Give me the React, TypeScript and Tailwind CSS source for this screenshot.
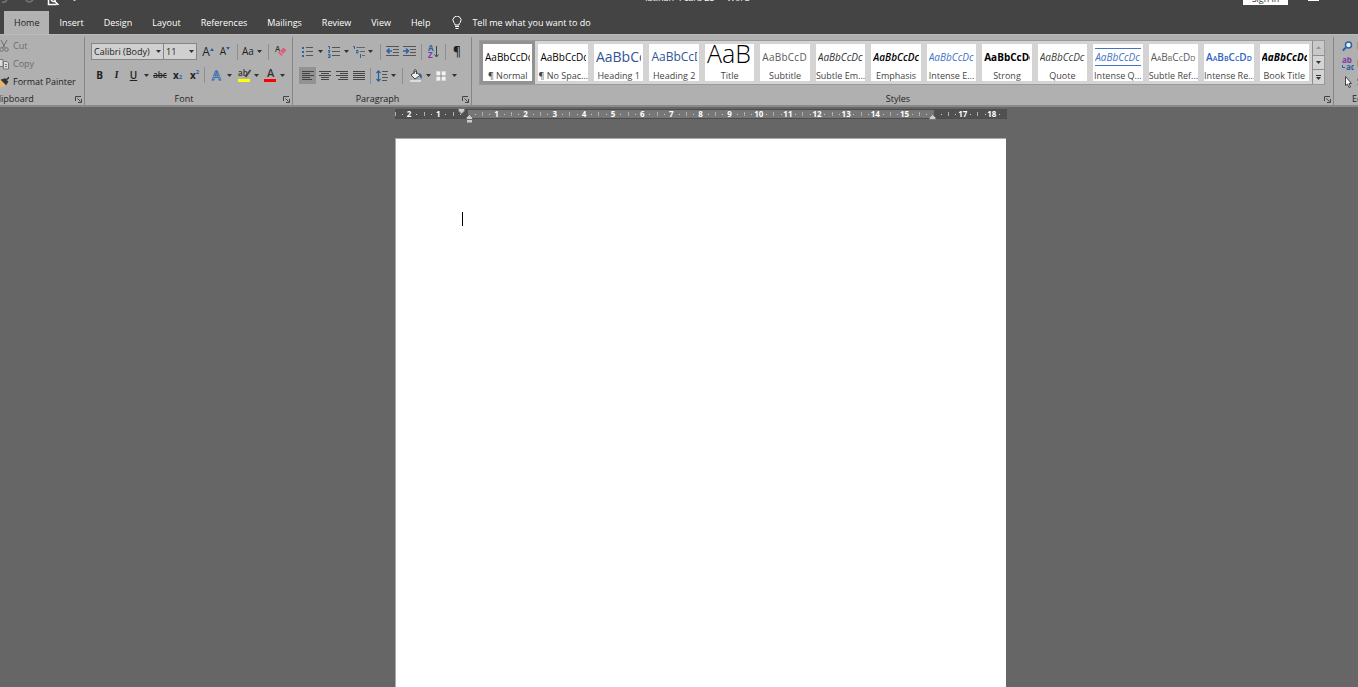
import { useState } from "react";
import type { ReactNode } from "react";

const tabs = ["Home", "Insert", "Design", "Layout", "References", "Mailings", "Review", "View", "Help"];

const styleTiles = [
  { name: "¶ Normal", sample: "AaBbCcDc", look: "text-[10px] font-medium text-black" },
  { name: "¶ No Spac...", sample: "AaBbCcDc", look: "text-[10px] font-medium text-black" },
  { name: "Heading 1", sample: "AaBbCc", look: "text-[14px] text-[#2f5597]" },
  { name: "Heading 2", sample: "AaBbCcD", look: "text-[12px] text-[#2f5597]" },
  { name: "Title", sample: "AaB", look: "-mt-2 text-[25px] font-light text-black" },
  { name: "Subtitle", sample: "AaBbCcD", look: "text-[10px] tracking-wide text-[#5a5a5a]" },
  { name: "Subtle Em...", sample: "AaBbCcDc", look: "text-[10px] font-medium italic text-[#303030]" },
  { name: "Emphasis", sample: "AaBbCcDc", look: "text-[10px] font-semibold italic text-black" },
  { name: "Intense E...", sample: "AaBbCcDc", look: "text-[10px] font-medium italic text-[#4472c4]" },
  { name: "Strong", sample: "AaBbCcDc", look: "text-[10px] font-bold text-black" },
  { name: "Quote", sample: "AaBbCcDc", look: "text-[10px] font-medium italic text-[#404040]" },
  { name: "Intense Q...", sample: "AaBbCcDc", look: "text-[10px] font-medium italic text-[#4472c4] border-y border-[#4472c4]" },
  { name: "Subtle Ref...", sample: "AaBbCcDd", look: "text-[10px] [font-variant:small-caps] text-[#5a5a5a]" },
  { name: "Intense Re...", sample: "AaBbCcDd", look: "text-[10px] [font-variant:small-caps] font-semibold text-[#2f62c4]" },
  { name: "Book Title", sample: "AaBbCcDc", look: "text-[10px] font-bold italic text-black" },
];

const rulerCells = ["2", "1", "", "1", "2", "3", "4", "5", "6", "7", "8", "9", "10", "11", "12", "13", "14", "15", "", "17", "18"];

const Caret = () => (
  <svg width="5" height="3" viewBox="0 0 5 3" className="shrink-0"><path d="M0 0h5L2.500 3z" fill="#333" /></svg>
);

const Sep = () => <span className="h-4 w-px shrink-0 bg-[#8f8f8f]" />;

const Btn = ({ label, className = "", children }: { label: string; className?: string; children?: ReactNode }) => (
  <button aria-label={label} className={"flex shrink-0 items-center justify-center " + className}>{children}</button>
);

const Launcher = ({ label }: { label: string }) => (
  <button aria-label={label} className="shrink-0">
    <svg width="7" height="7" viewBox="0 0 7 7" fill="none" stroke="#444" strokeWidth="1">
      <path d="M.5 5V.5H6M2.500 2.500l3 3M6.500 3v3.500H3" />
    </svg>
  </button>
);

const Group = ({ title, className, labelClass = "text-center", children }: { title: string; className: string; labelClass?: string; children: ReactNode }) => (
  <section className={"flex flex-col border-r border-[#858585] " + className}>
    <div className="h-[56px]">{children}</div>
    <div className="flex h-3 items-center pr-[2px] font-medium">
      <span className={"flex-1 leading-3 " + labelClass}>{title}</span>
      <Launcher label={title + " settings"} />
    </div>
  </section>
);

const Lines = ({ rows }: { rows: number[][] }) => (
  <svg width="12" height="10" viewBox="0 0 12 10" fill="#444">
    {rows.map(([x, w], i) => <rect key={i} x={x} y={i * 2} width={w} height="1" />)}
  </svg>
);

const Bullets = () => (
  <svg width="12" height="12" viewBox="0 0 12 12">
    <path d="M0 1h2v2H0zM0 5h2v2H0zM0 9h2v2H0z" fill="#2b62a3" />
    <path d="M4 1.500h7M4 5.500h7M4 9.500h7" stroke="#555" />
  </svg>
);

const Numbering = () => (
  <svg width="12" height="12" viewBox="0 0 12 12">
    <path d="M0 .5h1.500V3M0 4.500h2L.5 6.500H2M0 8.500h2v3H0M.5 10H2" fill="none" stroke="#2b62a3" />
    <path d="M4 1.500h8M4 5.500h8M4 9.500h8" stroke="#555" />
  </svg>
);

const Multilevel = () => (
  <svg width="13" height="12" viewBox="0 0 13 12">
    <path d="M0 .5h1.500V3M3 4.500h2V7H3.500V5.500M7.500 8v4" fill="none" stroke="#2b62a3" />
    <path d="M3.500 1.500H12M7 5.500h5M9 9.500h3" stroke="#666" />
  </svg>
);

const Indent = ({ flip = false }: { flip?: boolean }) => (
  <svg width="13" height="11" viewBox="0 0 13 11">
    <path d="M0 .5h13M7 3.500h6M7 6.500h6M0 9.500h13" stroke="#555" />
    <path d={flip ? "M0 5h5M3 2.500L5.500 5L3 7.500" : "M6 5H1M3.500 2.500L1 5l2.500 2.500"} fill="none" stroke="#2b62a3" strokeWidth="1.500" />
  </svg>
);

const LineSpacing = () => (
  <svg width="12" height="12" viewBox="0 0 12 12">
    <path d="M2.500 1v10M.5 3L2.500 1l2 2M.5 9l2 2l2-2" fill="none" stroke="#2b62a3" strokeWidth="1.300" />
    <path d="M6 1.500h6M6 4.500h5M6 7.500h6M6 10.500h5" stroke="#555" />
  </svg>
);

const Bucket = () => (
  <svg width="13" height="13" viewBox="0 0 13 13">
    <path d="M5.500 2.500L10 6.500L5 10L1 6z" fill="#eee" stroke="#444" />
    <path d="M4 5V1.500Q5.500-.5 6.500 1.500V5" fill="none" stroke="#444" />
    <path d="M9 4q4 1 2.500 6Q9.500 8 9 4z" fill="#2b62a3" />
    <path d="M0 11h11v2H0z" fill="#ddd" />
  </svg>
);

const Borders = () => (
  <svg width="10" height="10" viewBox="0 0 10 10">
    <path d="M0 0h10v10H0z" fill="#f3f3f3" />
    <path d="M5 0v10M0 5h10" stroke="#888" />
    <path d="M.5.5h9v9h-9z" fill="none" stroke="#bbb" strokeDasharray="1 1" />
  </svg>
);

const Eraser = () => (
  <svg width="12" height="13" viewBox="0 0 12 13">
    <text x="0" y="7" fontSize="8" fontWeight="600" fill="#333">A</text>
    <path d="M8.500 2.500L11.500 5L6.500 11L3 8z" fill="#d9627c" />
    <path d="M5 6.500L8 9.500" stroke="#eba3b2" />
  </svg>
);

const Highlighter = () => (
  <svg width="14" height="13" viewBox="0 0 14 13">
    <text x="0" y="7" fontSize="8" fontWeight="600" fill="#333">ab</text>
    <path d="M12.500 1L7.500 8" stroke="#444" strokeWidth="1.800" />
    <path d="M0 10h12v3H0z" fill="#ff0" />
  </svg>
);

const FontColor = () => (
  <svg width="13" height="13" viewBox="0 0 13 13">
    <text x="3" y="8" fontSize="11" fontWeight="600" fill="#333">A</text>
    <path d="M0 10h12v3H0z" fill="#f00" />
  </svg>
);

const SortIcon = () => (
  <svg width="12" height="14" viewBox="0 0 12 14">
    <text x="0" y="6" fontSize="8" fontWeight="700" fill="#2b62a3">A</text>
    <text x="0" y="13" fontSize="8" fontWeight="700" fill="#7d3aa5">Z</text>
    <path d="M8.500 1v11M6.500 9.500l2 2.500l2-2.500" fill="none" stroke="#444" />
  </svg>
);

const Clipboard = () => (
  <Group title="Clipboard" className="w-[85px] shrink-0 overflow-hidden" labelClass="-ml-[7px] text-left">
    <div className="flex flex-col">
      <button className="flex h-[18px] items-center gap-1 text-[#6c6c6c]">
        <svg width="9" height="12" viewBox="0 0 9 12" fill="none" stroke="#6c6c6c">
          <path d="M1 0l4 8M7 0L2.500 8" /><circle cx="1.500" cy="9.500" r="1.800" /><circle cx="6.500" cy="9.500" r="1.800" />
        </svg>
        Cut
      </button>
      <button className="flex h-[18px] items-center gap-1 text-[#6c6c6c]">
        <svg width="9" height="12" viewBox="0 0 9 12" fill="#ddd" stroke="#777">
          <path d="M-2 1.500h5v7h-5zM3.500 3.500H7l1.500 1.500v6h-5z" /><path d="M5 6.500h2M5 8.500h2" />
        </svg>
        Copy
      </button>
      <button className="flex h-[18px] items-center gap-1 whitespace-nowrap text-[#222]">
        <svg width="9" height="12" viewBox="0 0 9 12">
          <path d="M0 5l3-1l3 3l-3 4H0z" fill="#e8b765" /><path d="M2 4l3-1l2.500 2.500L6 8zM6 4l3.500-3" fill="#333" stroke="#333" strokeWidth="1.500" />
        </svg>
        Format Painter
      </button>
    </div>
  </Group>
);

const FontGroup = () => (
  <Group title="Font" className="w-[208px] shrink-0">
    <div className="flex flex-col gap-[7px] pl-[6px] pt-[6px]">
      <div className="flex h-[17px] items-center">
        <button aria-label="Font name" className="flex h-[17px] w-[73px] items-center justify-between whitespace-nowrap border border-[#858585] bg-[#d0d0d0] px-[2px]">Calibri (Body)<Caret /></button>
        <button aria-label="Font size" className="-ml-px flex h-[17px] w-[34px] items-center justify-between border border-[#858585] bg-[#d0d0d0] px-[2px]">11<Caret /></button>
        <Btn label="Grow font" className="ml-[3px] h-4 w-4 text-[12px] font-medium">A<svg width="4" height="8" viewBox="0 0 4 8"><path d="M0 3L2 0l2 3z" fill="#2b62a3" /></svg></Btn>
        <Btn label="Shrink font" className="ml-px h-4 w-4 text-[10px] font-medium">A<svg width="4" height="10" viewBox="0 0 4 10"><path d="M0 0h4L2 3z" fill="#2b62a3" /></svg></Btn>
        <span className="w-[4px]" /><Sep />
        <Btn label="Change case" className="ml-[4px] h-4 gap-[3px] text-[10px] font-medium">Aa<Caret /></Btn>
        <span className="w-[6px]" /><Sep />
        <Btn label="Clear formatting" className="ml-[6px] h-4"><Eraser /></Btn>
      </div>
      <div className="flex h-4 items-center text-[10px]">
        <Btn label="Bold" className="h-4 w-[17px] font-bold">B</Btn>
        <Btn label="Italic" className="h-4 w-[17px] font-serif font-bold italic">I</Btn>
        <Btn label="Underline" className="h-4 w-[17px] font-semibold underline">U</Btn>
        <Btn label="Underline options" className="h-4 w-[9px]"><Caret /></Btn>
        <Btn label="Strikethrough" className="h-4 w-[18px] text-[8px] font-semibold line-through">abc</Btn>
        <Btn label="Subscript" className="h-4 w-[17px] font-bold">x<sub className="text-[6px] text-[#2b62a3]">2</sub></Btn>
        <Btn label="Superscript" className="h-4 w-[17px] font-bold">x<sup className="text-[6px] text-[#2b62a3]">2</sup></Btn>
        <span className="w-px" /><Sep />
        <Btn label="Text effects" className="ml-[6px] h-4 gap-1">
          <svg width="12" height="13" viewBox="0 0 12 13"><text x="1" y="11" fontSize="13" fontWeight="600" fill="#c9d9ec" stroke="#2b62a3" strokeWidth=".8">A</text></svg><Caret />
        </Btn>
        <Btn label="Highlight" className="ml-[6px] h-4 gap-[2px]"><Highlighter /><Caret /></Btn>
        <Btn label="Font color" className="ml-[5px] h-4 gap-[3px]"><FontColor /><Caret /></Btn>
      </div>
    </div>
  </Group>
);

const ParagraphGroup = () => (
  <Group title="Paragraph" className="w-[179px] shrink-0">
    <div className="flex flex-col gap-[7px] pl-[6px] pt-[6px]">
      <div className="flex h-[17px] items-center">
        <Btn label="Bullets" className="ml-[3px] h-4 gap-[4px]"><Bullets /><Caret /></Btn>
        <Btn label="Numbering" className="ml-[5px] h-4 gap-[4px]"><Numbering /><Caret /></Btn>
        <Btn label="Multilevel list" className="ml-[4px] h-4 gap-[2px]"><Multilevel /><Caret /></Btn>
        <span className="w-[7px]" /><Sep />
        <Btn label="Decrease indent" className="ml-[5px] h-4"><Indent /></Btn>
        <Btn label="Increase indent" className="ml-1 h-4"><Indent flip /></Btn>
        <span className="w-[5px]" /><Sep />
        <Btn label="Sort" className="ml-[6px] h-4"><SortIcon /></Btn>
        <span className="w-[5px]" /><Sep />
        <Btn label="Show marks" className="ml-[7px] h-4 text-[12px] font-semibold">¶</Btn>
      </div>
      <div className="flex h-[17px] items-center">
        <Btn label="Align left" className="h-[17px] w-[17px] bg-[#929292]"><Lines rows={[[0, 12], [0, 8], [0, 12], [0, 8], [0, 10]]} /></Btn>
        <Btn label="Center" className="h-[17px] w-[17px]"><Lines rows={[[0, 12], [2, 8], [0, 12], [2, 8], [2, 8]]} /></Btn>
        <Btn label="Align right" className="h-[17px] w-[17px]"><Lines rows={[[0, 12], [4, 8], [0, 12], [4, 8], [2, 10]]} /></Btn>
        <Btn label="Justify" className="h-[17px] w-[17px]"><Lines rows={[[0, 12], [0, 12], [0, 12], [0, 12], [0, 12]]} /></Btn>
        <span className="w-[3px]" /><Sep />
        <Btn label="Line spacing" className="ml-[5px] h-4 gap-[3px]"><LineSpacing /><Caret /></Btn>
        <span className="w-[6px]" /><Sep />
        <Btn label="Shading" className="ml-[7px] h-4 gap-[3px]"><Bucket /><Caret /></Btn>
        <Btn label="Borders" className="ml-[5px] h-4 gap-[6px]"><Borders /><Caret /></Btn>
      </div>
    </div>
  </Group>
);

const StylesGroup = () => {
  const [selected, setSelected] = useState(0);
  return (
    <Group title="Styles" className="min-w-0 flex-1">
      <div className="pl-[7px] pr-2 pt-[3px]">
        <div className="flex h-[45px] border border-[#999]">
          <div className="flex min-w-0 flex-1 bg-[#d4d4d4]">
            {styleTiles.map((tile, i) => (
              <button
                key={tile.name}
                onClick={() => setSelected(i)}
                className={"flex min-w-0 flex-1 flex-col border-[3px] " + (i === selected ? "border-[#929292]" : "border-[#d4d4d4]")}
              >
                <span className="flex h-[37px] w-full flex-col overflow-hidden bg-white px-[2px]">
                  <span className="flex h-[26px] w-full items-center overflow-hidden">
                    <span className={"w-full whitespace-nowrap text-left leading-4 " + tile.look}>{tile.sample}</span>
                  </span>
                  <span className="-mx-[2px] whitespace-nowrap text-center leading-[11px] text-[#444]">{tile.name}</span>
                </span>
              </button>
            ))}
          </div>
          <div className="flex w-3 flex-col border-l border-[#8c8c8c]">
            <button aria-label="Previous styles" className="flex flex-1 items-center justify-center bg-[#c9c9c9]"><svg width="5" height="3" viewBox="0 0 5 3"><path d="M0 3h5L2.500 0z" fill="#999" /></svg></button>
            <button aria-label="Next styles" className="flex flex-1 items-center justify-center border-y border-[#8c8c8c] bg-[#d4d4d4]"><Caret /></button>
            <button aria-label="More styles" className="flex flex-1 flex-col items-center justify-center gap-px bg-[#d4d4d4]"><span className="h-px w-[5px] bg-[#333]" /><Caret /></button>
          </div>
        </div>
      </div>
    </Group>
  );
};

const EditingGroup = () => (
  <section className="w-6 shrink-0 overflow-hidden whitespace-nowrap pl-2">
    <div className="flex h-[56px] flex-col">
      <button className="flex h-[18px] items-center gap-[3px]">
        <svg width="12" height="11" viewBox="0 0 12 11" className="shrink-0"><circle cx="6.500" cy="4" r="3" fill="#e8eef6" stroke="#2b62a3" strokeWidth="1.500" /><path d="M4 6.500L.8 9.500" stroke="#2b62a3" strokeWidth="2" /></svg>Find
      </button>
      <button className="flex h-[18px] items-center gap-[3px]">
        <svg width="12" height="14" viewBox="0 0 12 14" className="shrink-0"><text x="0" y="6" fontSize="8" fontWeight="700" fill="#7d3aa5">ab</text><text x="4" y="13" fontSize="8" fontWeight="700" fill="#2b62a3">ac</text><path d="M.5 8v2.500H3" fill="none" stroke="#2b62a3" /></svg>Replace
      </button>
      <button className="flex h-[18px] items-center gap-[3px]">
        <svg width="12" height="12" viewBox="0 0 12 12" className="shrink-0"><path d="M3.500.5v9L5.500 8L7 11.500L8.500 11L7 7.500h2.500z" fill="#fff" stroke="#444" /></svg>Select
      </button>
    </div>
    <div className="flex h-3 items-center pl-[10px] font-medium leading-3">Editing</div>
  </section>
);

const Ruler = () => (
  <div className="relative flex h-[10px] w-[612px] shrink-0 items-center border-y border-[#4d4d4d] bg-[linear-gradient(to_right,#505050_12%,#777_12%,#777_88%,#505050_88%)] text-[8px] font-bold leading-none text-white">
    {rulerCells.map((n, i) => (
      <div key={i} className="grid h-full flex-1 grid-cols-4 items-center">
        <span className="h-1 w-px bg-[#b0b0b0]" />
        <span className="size-px bg-[#ccc]" />
        <span className="flex w-0 justify-center">{n}</span>
        <span className="size-px bg-[#ccc]" />
      </div>
    ))}
    <svg width="16" height="17" viewBox="0 0 16 17" className="absolute -top-[2px] left-[63px]">
      <path d="M.5.500h6V3L3.500 6L.5 3z" fill="#ccc" stroke="#777" />
      <path d="M11.500 6.500l3 3v5.500h-6V9.500z" fill="#ccc" stroke="#666" /><path d="M8.500 11.500h6" stroke="#666" />
    </svg>
    <svg width="7" height="6" viewBox="0 0 7 6" className="absolute left-[534px] top-1">
      <path d="M3.500.5l3 3v2h-6v-2z" fill="#ccc" stroke="#777" />
    </svg>
  </div>
);

const App = () => {
  return (
    <div className="flex h-screen flex-col overflow-hidden bg-[#666] font-['Open_Sans','Noto_Sans',sans-serif] text-[9px] text-[#222]">
      <header className="bg-[#444] text-white">
        <div className="flex h-[11px] items-start justify-between overflow-hidden">
          <div className="flex flex-1 items-start">
            <svg width="80" height="8" viewBox="0 0 80 8" fill="none">
              <path d="M2 2q3 1 5-2M26 0q3 4 7 0" stroke="#777" strokeWidth="1.500" />
              <path d="M48.500 0v4.500h8M51 0q2.500 3 4.500 0M55 1.500l3.500 3.500" stroke="#fff" strokeWidth="1.500" />
              <path d="M73 0h3l-1.500 1z" fill="#fff" />
            </svg>
          </div>
          <div className="-mt-2 whitespace-pre pl-[76px] leading-[12px]">latihan 4 cara 25  -  Word</div>
          <div className="flex flex-1 items-start justify-end gap-5 pr-[39px]">
            <button className="-mt-2 h-[13px] w-[45px] bg-white leading-[12px] text-[#333]">Sign in</button>
            <span className="h-px w-[11px] bg-white" />
          </div>
        </div>
        <nav className="flex h-[23px] items-stretch pl-1">
          {tabs.map((tab) => (
            <button key={tab} className={tab === "Home" ? "bg-[#b2b2b2] px-[10px] text-[#222]" : "px-[10px]"}>{tab}</button>
          ))}
          <button className="flex items-center gap-[10px] pl-[12px]">
            <svg width="10" height="13" viewBox="0 0 10 13" fill="none" stroke="#fff"><path d="M3 9Q3 7.500 1.800 6.500A4 4 0 1 1 8.200 6.500Q7 7.500 7 9zM3 10.500h4M3.500 12.500h3" /></svg>
            Tell me what you want to do
          </button>
        </nav>
      </header>
      <div className="flex h-[73px] shrink-0 border-b-2 border-t border-b-[#8a8a8a] border-t-[#bbb] bg-[#b0b0b0] pt-[2px]">
        <Clipboard />
        <FontGroup />
        <ParagraphGroup />
        <StylesGroup />
        <EditingGroup />
      </div>
      <main className="flex min-h-0 flex-1 flex-col items-center pl-[43px] pt-[2px]">
        <Ruler />
        <div
          contentEditable
          suppressContentEditableWarning
          aria-label="Document"
          className="mt-[19px] w-[611px] flex-1 border-l border-t border-[#aaa] bg-white pl-[66px] pt-[73px] outline-none"
        >
          <span className="block h-[14px] w-px bg-black" />
        </div>
      </main>
    </div>
  );
};

export default App;
